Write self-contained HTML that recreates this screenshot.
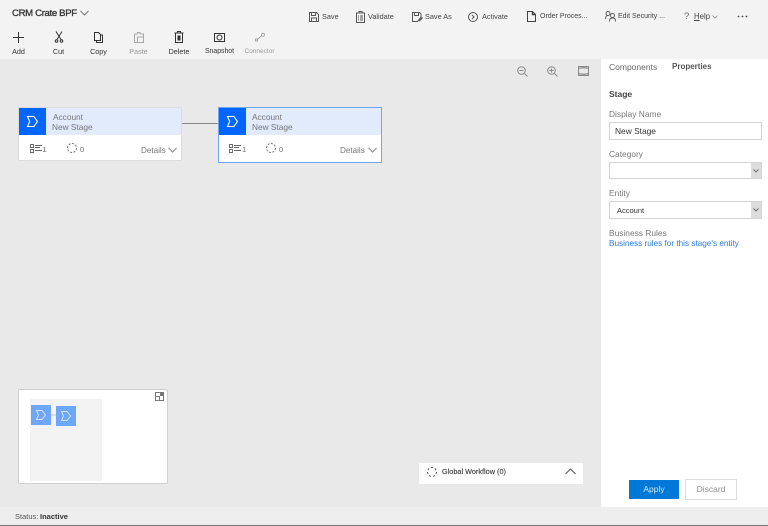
<!DOCTYPE html>
<html><head><meta charset="utf-8"><style>
html,body{margin:0;padding:0}
body{width:768px;height:526px;overflow:hidden;position:relative;background:#e9e9e9;font-family:"Liberation Sans",sans-serif;color:#333}
#w{position:absolute;left:0;top:0;width:768px;height:526px;overflow:hidden;filter:blur(.35px)}
.a{position:absolute;white-space:nowrap}
.tb{font-size:7.2px;color:#333;transform:translateX(-50%);line-height:10px}
.tp{font-size:7.3px;color:#444;line-height:10px}
svg{position:absolute;overflow:visible;fill:none}
.lbl{font-size:8.4px;color:#777;line-height:11px}
.box{position:absolute;box-sizing:border-box;background:#fff;border:1px solid #d4d4d4}
.card{position:absolute;box-sizing:border-box;background:#fff;width:164px;height:56px}
.t{font-size:8.3px;line-height:11px;color:#777}
.d{font-size:8.1px;line-height:11px;color:#777}
</style></head><body><div id="w">
<div class="a" style="left:0;top:0;width:768px;height:59px;background:#f3f3f3"></div>
<div class="a" style="left:12px;top:7px;font-size:9.6px;letter-spacing:-.35px;color:#333;line-height:13px;-webkit-text-stroke:.3px #333">CRM Crate BPF</div>
<svg style="left:80px;top:10px" width="9" height="6"><path d="M.5 1l4 4 4-4" stroke="#777"/></svg>

<!-- top right commands -->
<svg style="left:309px;top:12px" width="10" height="10" stroke="#555"><path d="M.5.5h7l2 2v7h-9zM2.500.5v3h4v-3M2.500 9.500v-3.500h5v3.500"/></svg>
<div class="a tp" style="left:322px;top:12px">Save</div>
<svg style="left:356px;top:11px" width="9" height="12" stroke="#555"><path d="M.5 2h8v9.500h-8zM3 2V.5h3V2M2 5h1M4 5h3M2 7h1M4 7h3M2 9h1M4 9h3"/></svg>
<div class="a tp" style="left:368px;top:12px">Validate</div>
<svg style="left:412px;top:12px" width="11" height="10" stroke="#555"><path d="M.5.5h7l1.500 1.500v3L5.500 9.500h-5zM2.500.5v3h4v-3"/><path d="M7 9l3.500-3.500" stroke-width="1.500"/></svg>
<div class="a tp" style="left:425px;top:12px">Save As</div>
<svg style="left:468px;top:12px" width="10" height="10" stroke="#555"><circle cx="5" cy="5" r="4.500"/><path d="M4 3l2 2-2 2"/></svg>
<div class="a tp" style="left:482px;top:12px">Activate</div>
<svg style="left:527px;top:11px" width="9" height="11" stroke="#444"><path d="M.5.5h5l3 3v7h-8z"/><path d="M5.500.5v3h3" stroke-width="1.400"/></svg>
<div class="a tp" style="left:540px;top:12px;font-size:7px">Order Proces...</div>
<svg style="left:605px;top:11px" width="11" height="11" stroke="#555" stroke-width=".9"><circle cx="3" cy="2.500" r="2"/><path d="M.5 8c0-3 1-3.500 2.500-3.500"/><circle cx="7.500" cy="4.500" r="2"/><path d="M4.500 10.500c0-3 1-3.500 3-3.500s3 .5 3 3.500"/></svg>
<div class="a tp" style="left:618px;top:12px;font-size:7px">Edit Security ...</div>
<div class="a" style="left:684px;top:11px;font-size:9.500px;color:#666;line-height:12px">?</div>
<div class="a tp" style="left:694px;top:12px;font-size:7.800px"><u>H</u>elp</div>
<svg style="left:712px;top:15px" width="6" height="4"><path d="M.5.5L3 3 5.500.5" stroke="#888" stroke-width=".8"/></svg>
<svg style="left:737px;top:15px" width="11" height="3"><circle cx="1.500" cy="1.500" r=".9" fill="#444"/><circle cx="5.500" cy="1.500" r=".9" fill="#444"/><circle cx="9.500" cy="1.500" r=".9" fill="#444"/></svg>

<!-- toolbar -->
<svg style="left:13px;top:32px" width="11" height="11" stroke="#333"><path d="M5.500 0v11M0 5.500h11"/></svg>
<div class="a tb" style="left:18.500px;top:47px">Add</div>
<svg style="left:55px;top:31px" width="8" height="12" stroke="#333"><path d="M1 .5l5 8M7 .5l-5 8"/><circle cx="1.500" cy="10" r="1.300"/><circle cx="6.500" cy="10" r="1.300"/></svg>
<div class="a tb" style="left:58.500px;top:47px">Cut</div>
<svg style="left:94px;top:32px" width="9" height="11" stroke="#333"><path d="M.5.5h4l2 2v6h-6z"/><path d="M6.500 3h2v7.500h-6V8.500"/></svg>
<div class="a tb" style="left:98.500px;top:47px">Copy</div>
<svg style="left:134px;top:32px" width="10" height="11" stroke="#a8a8a8"><path d="M.5 2h3M6 2h3.500v3M3.500 2V.5h2.500V2M.5 2v8.500h3M3.500 5h6v5.500h-6z"/></svg>
<div class="a tb" style="left:138.500px;top:47px;color:#999">Paste</div>
<svg style="left:174px;top:31px" width="10" height="12" stroke="#333"><path d="M.5 2h9M3.500 2V.5h3V2M1.500 2v9.500h7V2"/><path d="M3.500 4.500h3v5h-3z" fill="#333" stroke="none"/></svg>
<div class="a tb" style="left:179px;top:47px">Delete</div>
<svg style="left:214px;top:32px" width="11" height="10" stroke="#333"><path d="M.5 1.500h10v8h-10z"/><circle cx="5.500" cy="5.500" r="2.500"/></svg>
<div class="a tb" style="left:219.500px;top:47px;font-size:6.900px">Snapshot</div>
<svg style="left:255px;top:33px" width="10" height="9" stroke="#999" stroke-width=".8"><circle cx="1.500" cy="7" r="1.200"/><circle cx="8" cy="1.800" r="1.500"/><path d="M2.500 6.200l4.200-3.400"/></svg>
<div class="a tb" style="left:259.500px;top:47px;color:#999;font-size:6.500px">Connector</div>

<!-- zoom icons -->
<svg style="left:517px;top:66px" width="11" height="11" stroke="#888"><circle cx="4.500" cy="4.500" r="3.800"/><path d="M7.500 7.500l3 3M2.500 4.500h4"/></svg>
<svg style="left:547px;top:66px" width="11" height="11" stroke="#888"><circle cx="4.500" cy="4.500" r="3.800"/><path d="M7.500 7.500l3 3M2.500 4.500h4M4.500 2.500v4"/></svg>
<svg style="left:578px;top:66px" width="11" height="10" stroke="#888"><path d="M.5.5h10v9H.5z"/><path d="M.5 2.500C3 1.500 8 1.500 10.500 2.500M.5 7.500C3 8.500 8 8.500 10.500 7.500" stroke-width="1.200"/></svg>

<!-- connector line -->
<div class="a" style="left:182px;top:123px;width:37px;height:1px;background:#8a8a8a"></div>

<!-- card 1 -->
<div class="card" style="left:18px;top:107px;border:1px solid #dcdcdc;height:54px">
<div class="a" style="left:0;top:0;width:27px;height:27px;background:#0066ff"></div>
<svg style="left:8px;top:8px" width="11" height="11" stroke="#fff" stroke-width="1.100"><path d="M.5.5h6.500l3.500 5-3.500 5H.5l2.200-5z"/></svg>
<div class="a" style="left:27px;top:0;width:135px;height:27px;background:#e1ebfc"></div>
<div class="a t" style="left:34px;top:4px">Account</div>
<div class="a t" style="left:33px;top:14px">New Stage</div>
<svg style="left:11px;top:36px" width="13" height="9" stroke="#666" stroke-width=".9"><path d="M.5.500h3v3h-3zM.5 5.500h3v3h-3zM5 1.500h7M5 3.500h5M5 6.500h7"/></svg>
<div class="a" style="left:23.500px;top:37px;font-size:7.500px;line-height:9px;color:#666">1</div>
<svg style="left:48px;top:35px" width="10" height="10" stroke="#777"><circle cx="5" cy="5" r="4.500" stroke-dasharray="2 1.500"/></svg>
<div class="a" style="left:61px;top:37px;font-size:7.500px;line-height:9px;color:#666">0</div>
<div class="a d" style="left:122px;top:37px">Details</div>
<svg style="left:149px;top:39px" width="9" height="6"><path d="M.5 1l4 4 4-4" stroke="#888"/></svg>
</div>

<!-- card 2 -->
<div class="card" style="left:218px;top:107px;border:1px solid #6ea6f2;height:56px">
<div class="a" style="left:0;top:0;width:27px;height:27px;background:#0066ff"></div>
<svg style="left:8px;top:8px" width="11" height="11" stroke="#fff" stroke-width="1.100"><path d="M.5.5h6.500l3.500 5-3.500 5H.5l2.200-5z"/></svg>
<div class="a" style="left:27px;top:0;width:135px;height:27px;background:#e1ebfc"></div>
<div class="a t" style="left:33px;top:4px">Account</div>
<div class="a t" style="left:33px;top:14px">New Stage</div>
<svg style="left:10px;top:36px" width="13" height="9" stroke="#666" stroke-width=".9"><path d="M.5.500h3v3h-3zM.5 5.500h3v3h-3zM5 1.500h7M5 3.500h5M5 6.500h7"/></svg>
<div class="a" style="left:23px;top:37px;font-size:7.500px;line-height:9px;color:#666">1</div>
<svg style="left:47px;top:35px" width="10" height="10" stroke="#777"><circle cx="5" cy="5" r="4.500" stroke-dasharray="2 1.500"/></svg>
<div class="a" style="left:60px;top:37px;font-size:7.500px;line-height:9px;color:#666">0</div>
<div class="a d" style="left:121px;top:37px">Details</div>
<svg style="left:149px;top:39px" width="9" height="6"><path d="M.5 1l4 4 4-4" stroke="#888"/></svg>
</div>

<!-- minimap -->
<div class="a" style="left:18px;top:389px;width:150px;height:95px;box-sizing:border-box;background:#fff;border:1px solid #cfcfcf;border-radius:2px"></div>
<div class="a" style="left:30px;top:399px;width:72px;height:82px;background:#f3f3f3"></div>
<div class="a" style="left:31px;top:405px;width:20px;height:20px;background:#6ea6fa"></div>
<div class="a" style="left:51px;top:414px;width:5px;height:2px;background:#ddd"></div>
<div class="a" style="left:56px;top:406px;width:20px;height:20px;background:#6ea6fa"></div>
<svg style="left:36px;top:410px" width="10" height="10" stroke="#d5e4fb"><path d="M.5.5h5.500l3.500 4.500-3.500 4.500H.5l2-4.500z"/></svg>
<svg style="left:61px;top:411px" width="10" height="10" stroke="#d5e4fb"><path d="M.5.5h5.500l3.500 4.500-3.500 4.500H.5l2-4.500z"/></svg>
<svg style="left:155px;top:392px" width="9" height="9" stroke="#777"><path d="M.5.5h8v8h-8zM.5 4.500h4v4"/><path d="M5 1h3v3h-3z" fill="#777" stroke="none"/></svg>

<!-- global workflow -->
<div class="a" style="left:419px;top:463px;width:164px;height:21px;background:#fff"></div>
<svg style="left:427px;top:467px" width="10" height="10" stroke="#555"><circle cx="5" cy="5" r="4.500" stroke-dasharray="2 2"/></svg>
<div class="a" style="left:442px;top:467px;font-size:7.300px;line-height:10px;color:#444;-webkit-text-stroke:.15px #444">Global Workflow (0)</div>
<svg style="left:565px;top:468px" width="11" height="7"><path d="M.5 6L5.500 1l5 5" stroke="#555"/></svg>

<!-- right panel -->
<div class="a" style="left:601px;top:59px;width:167px;height:448px;background:#fff"></div>
<div class="a" style="left:609px;top:61px;font-size:8.500px;line-height:12px;color:#666">Components</div>
<div class="a" style="left:672px;top:61px;font-size:8px;line-height:12px;color:#555;font-weight:bold">Properties</div>
<div class="a" style="left:609px;top:88px;font-size:8.500px;line-height:12px;color:#444;font-weight:bold">Stage</div>
<div class="a lbl" style="left:609px;top:109px">Display Name</div>
<div class="box" style="left:609px;top:122px;width:153px;height:18px"></div>
<div class="a" style="left:615px;top:126px;font-size:8.400px;line-height:11px;color:#333">New Stage</div>
<div class="a lbl" style="left:609px;top:149px">Category</div>
<div class="box" style="left:609px;top:162px;width:153px;height:17px"></div>
<div class="a" style="left:751px;top:163px;width:10px;height:15px;background:#dcdcdc"></div>
<svg style="left:753px;top:169px" width="6" height="4"><path d="M.5.5L3 3 5.500.5" stroke="#666" stroke-width=".9"/></svg>
<div class="a lbl" style="left:609px;top:188px">Entity</div>
<div class="box" style="left:609px;top:201px;width:153px;height:18px"></div>
<div class="a" style="left:751px;top:202px;width:10px;height:16px;background:#dcdcdc"></div>
<svg style="left:753px;top:208px" width="6" height="4"><path d="M.5.5L3 3 5.500.5" stroke="#666" stroke-width=".9"/></svg>
<div class="a" style="left:617px;top:206px;font-size:7.500px;line-height:10px;color:#333">Account</div>
<div class="a lbl" style="left:609px;top:228px">Business Rules</div>
<div class="a" style="left:609px;top:238px;font-size:8.200px;line-height:11px;color:#2b7de0">Business rules for this stage's entity</div>
<div class="a" style="left:629px;top:480px;width:50px;height:19px;background:#0078d7;text-align:center;font-size:8.500px;line-height:19px;color:#d8e8f8">Apply</div>
<div class="a" style="left:685px;top:479px;width:50px;height:19px;background:#fff;border:1px solid #ddd;text-align:center;font-size:8.500px;line-height:19px;color:#8a8a8a">Discard</div>

<!-- status -->
<div class="a" style="left:0;top:507px;width:768px;height:17px;background:#eeeeee"></div>
<div class="a" style="left:15px;top:512px;font-size:7.500px;line-height:10px;color:#555">Status:</div>
<div class="a" style="left:40px;top:512px;font-size:7.500px;line-height:10px;color:#333;font-weight:bold">Inactive</div>
<div class="a" style="left:0;top:525px;width:768px;height:1px;background:#777"></div>
</div></body></html>
